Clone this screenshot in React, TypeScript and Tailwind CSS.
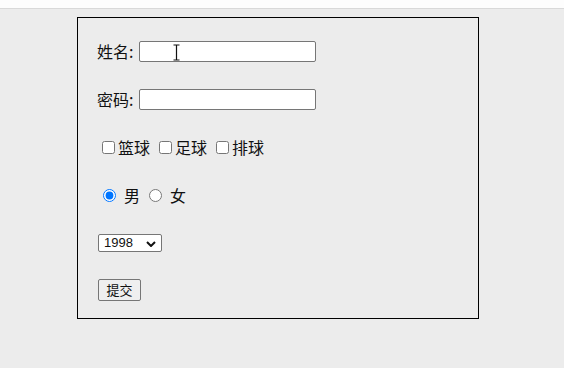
const cjk = { fontFamily: '"Noto Sans CJK SC", "Noto Sans", sans-serif' }
const latin = { fontFamily: '"Liberation Sans", Arial, sans-serif' }

function TextField({ withCursor = false }: { withCursor?: boolean }) {
  return (
    <div className="relative h-[21px] w-[177px] rounded-[2px] border border-[#767676] bg-white">
      {withCursor && (
        <svg className="absolute left-[33px] top-[2px]" width="7" height="18" viewBox="0 0 7 18">
          <path d="M0.5 1h6M3.5 1v15M0.5 16h6" stroke="#111" strokeWidth="1.2" fill="none" />
        </svg>
      )}
    </div>
  )
}

function Check({ label, last = false }: { label: string; last?: boolean }) {
  return (
    <label className={`flex items-center ${last ? '' : 'mr-[9px]'}`}>
      <input type="checkbox" className="m-0 h-[13px] w-[13px]" />
      <span className="ml-[3px] text-[16px] leading-none text-[#111]">{label}</span>
    </label>
  )
}

function Radio({ label, checked = false }: { label: string; checked?: boolean }) {
  return (
    <label className="mr-[9px] flex items-center">
      <input type="radio" name="sex" defaultChecked={checked} className="m-0 h-[13px] w-[13px]" />
      <span className="ml-[8px] text-[16px] leading-none text-[#111]">{label}</span>
    </label>
  )
}

export default function App() {
  return (
    <div className="min-h-[368px] w-[564px] bg-[#ececec]" style={cjk}>
      <div className="h-[8px] bg-[#fdfdfd]" />
      <div className="h-px bg-[#d9d9d9]" />
      <div className="ml-[77px] mt-[8px] flex h-[302px] w-[402px] flex-col border border-black pl-[19px] pt-[9px]">
        <div className="flex h-[48px] items-center">
          <span className="w-[42px] text-[16px] text-[#111]">姓名:</span>
          <TextField withCursor />
        </div>
        <div className="flex h-[48px] items-center">
          <span className="w-[42px] text-[16px] text-[#111]">密码:</span>
          <TextField />
        </div>
        <div className="flex h-[48px] items-center pl-[5px]">
          <Check label="篮球" />
          <Check label="足球" />
          <Check label="排球" last />
        </div>
        <div className="flex h-[48px] items-center pl-[6px]">
          <Radio label="男" checked />
          <Radio label="女" />
        </div>
        <div className="flex h-[48px] items-center pl-[1px]">
          <div className="relative h-[18px] w-[64px] rounded-[2px] border border-[#767676] bg-white">
            <select
              defaultValue="1998"
              className="block h-[16px] w-full appearance-none pl-[5px] text-[13px] leading-[16px] text-[#111]"
              style={latin}
            >
              <option>1996</option>
              <option>1997</option>
              <option>1998</option>
              <option>1999</option>
            </select>
            <svg
              className="pointer-events-none absolute right-[5px] top-[6px]"
              width="10"
              height="6"
              viewBox="0 0 10 6"
            >
              <path d="M1 1l4 4 4-4" stroke="#111" strokeWidth="2" fill="none" />
            </svg>
          </div>
        </div>
        <div className="flex h-[48px] items-center pb-[3px] pl-[1px]">
          <button
            type="button"
            className="h-[22px] w-[43px] rounded-[2px] border border-[#767676] bg-[#efefef] text-[13px] leading-none text-[#111]"
          >
            提交
          </button>
        </div>
      </div>
    </div>
  )
}
